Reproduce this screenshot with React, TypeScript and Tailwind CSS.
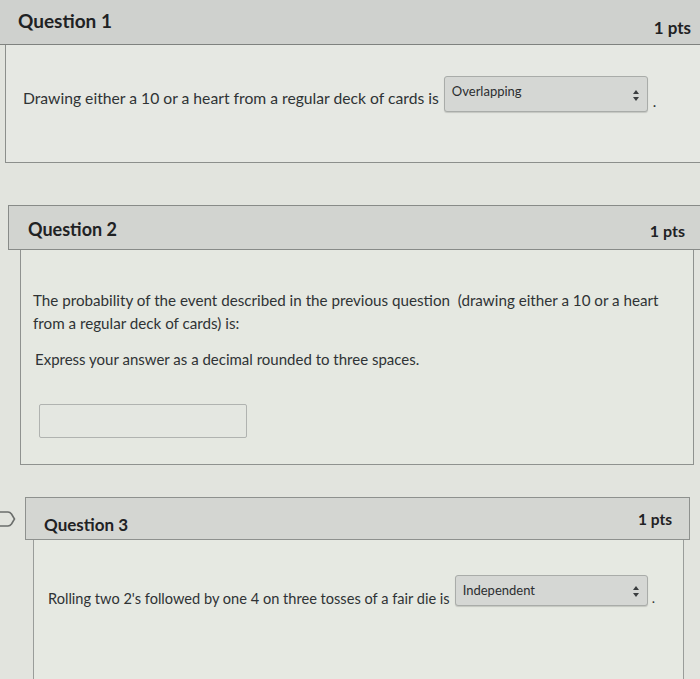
import React from 'react';

const Arrows = () => (
  <svg width="6" height="11" viewBox="0 0 6 11" className="shrink-0">
    <path d="M3 0 L6 4 L0 4 Z" fill="#3a3d3f" />
    <path d="M3 11 L6 7 L0 7 Z" fill="#3a3d3f" />
  </svg>
);

const Select = ({ value, width, height }: { value: string; width: string; height: string }) => (
  <div
    className={`${width} ${height} flex items-start justify-between pl-[7px] pr-[8px] pt-[6px] rounded-[3px] border border-[#a9aca9] bg-[#d5d7d4] shadow-[0_1px_1px_rgba(0,0,0,0.15)]`}
  >
    <span className="text-[13px] leading-4 text-[#2b2e30]">{value}</span>
    <span className="self-center pb-[4px]"><Arrows /></span>
  </div>
);

export default function App() {
  return (
    <div
      className="w-[700px] h-[679px] overflow-hidden bg-[#e2e4de] text-[#2f3335] flex flex-col"
      style={{ fontFamily: 'Lato, "Open Sans", sans-serif' }}
    >
      {/* Question 1 */}
      <div className="flex flex-col">
        <div className="h-[45px] w-[712px] bg-[#cfd1ce] border-b border-[#7f827f] flex justify-between pl-[18px] pr-[20px]">
          <span className="text-[19px] font-bold text-[#1f2224] pt-[7px]">Question 1</span>
          <span className="text-[17px] font-bold text-[#1f2224] pt-[15px] mr-[1px]">1 pts</span>
        </div>
        <div className="ml-[5px] w-[710px] h-[118px] border-l border-b border-[#8c8f8c] bg-[#e6e8e3] flex items-start pl-[17px] pt-[31px]">
          <span className="text-[15.7px] leading-5 mt-[12px]">Drawing either a 10 or a heart from a regular deck of cards is</span>
          <span className="ml-[5px]">
            <Select value="Overlapping" width="w-[204px]" height="h-[36px]" />
          </span>
          <span className="ml-[5px] mt-[14px] text-[15px]">.</span>
        </div>
      </div>

      {/* Question 2 */}
      <div className="flex flex-col mt-[42px]">
        <div className="ml-[8px] w-[700px] h-[45px] bg-[#d2d4d0] border-t border-l border-b border-[#888b88] flex justify-between pl-[19px] pr-[22px]">
          <span className="text-[18px] font-bold text-[#1f2224] pt-[10px]">Question 2</span>
          <span className="text-[16px] font-bold text-[#1f2224] pt-[13px] mr-[1px]">1 pts</span>
        </div>
        <div className="ml-[20px] w-[674px] h-[215px] border-l border-r border-b border-[#8f928f] bg-[#e5e8e1] flex flex-col pl-[12px] pt-[39px]">
          <p className="text-[15.2px] leading-[23px] w-[640px]">
            The probability of the event described in the previous question&nbsp; (drawing either a 10 or a heart from a regular deck of cards) is:
          </p>
          <p className="text-[15px] leading-[23px] mt-[13px] ml-[2px]">
            Express your answer as a decimal rounded to three spaces.
          </p>
          <div className="mt-[33px] ml-[6px] w-[208px] h-[34px] border border-[#b0b3b0] rounded-[2px] bg-[#e4e7e1]" />
        </div>
      </div>

      {/* Question 3 */}
      <div className="flex flex-col mt-[32px] relative">
        <svg width="16" height="18" viewBox="0 0 16 18" className="absolute left-0 top-[13px]">
          <path d="M-4 2 H8 Q10 2 11.5 4 L14.5 9 L11.5 14 Q10 16 8 16 H-4" fill="none" stroke="#6b6e6c" strokeWidth="1.6" />
        </svg>
        <div className="ml-[25px] w-[665px] h-[43px] bg-[#d4d6d2] border-t border-l border-r border-b border-[#8e918e] flex justify-between pl-[18px] pr-[17px]">
          <span className="text-[17px] font-bold text-[#1f2224] pt-[14px]">Question 3</span>
          <span className="text-[15.5px] font-bold text-[#1f2224] pt-[10px]">1 pts</span>
        </div>
        <div className="ml-[33px] w-[651px] h-[160px] border-l border-r border-[#9a9d9a] bg-[#e6e9e2] flex items-start pl-[14px] pt-[35px]">
          <span className="text-[14.6px] mt-[13px]">Rolling two 2's followed by one 4 on three tosses of a fair die is</span>
          <span className="ml-[5px]">
            <Select value="Independent" width="w-[193px]" height="h-[31px]" />
          </span>
          <span className="ml-[4px] mt-[12px] text-[14px]">.</span>
        </div>
      </div>
    </div>
  );
}
